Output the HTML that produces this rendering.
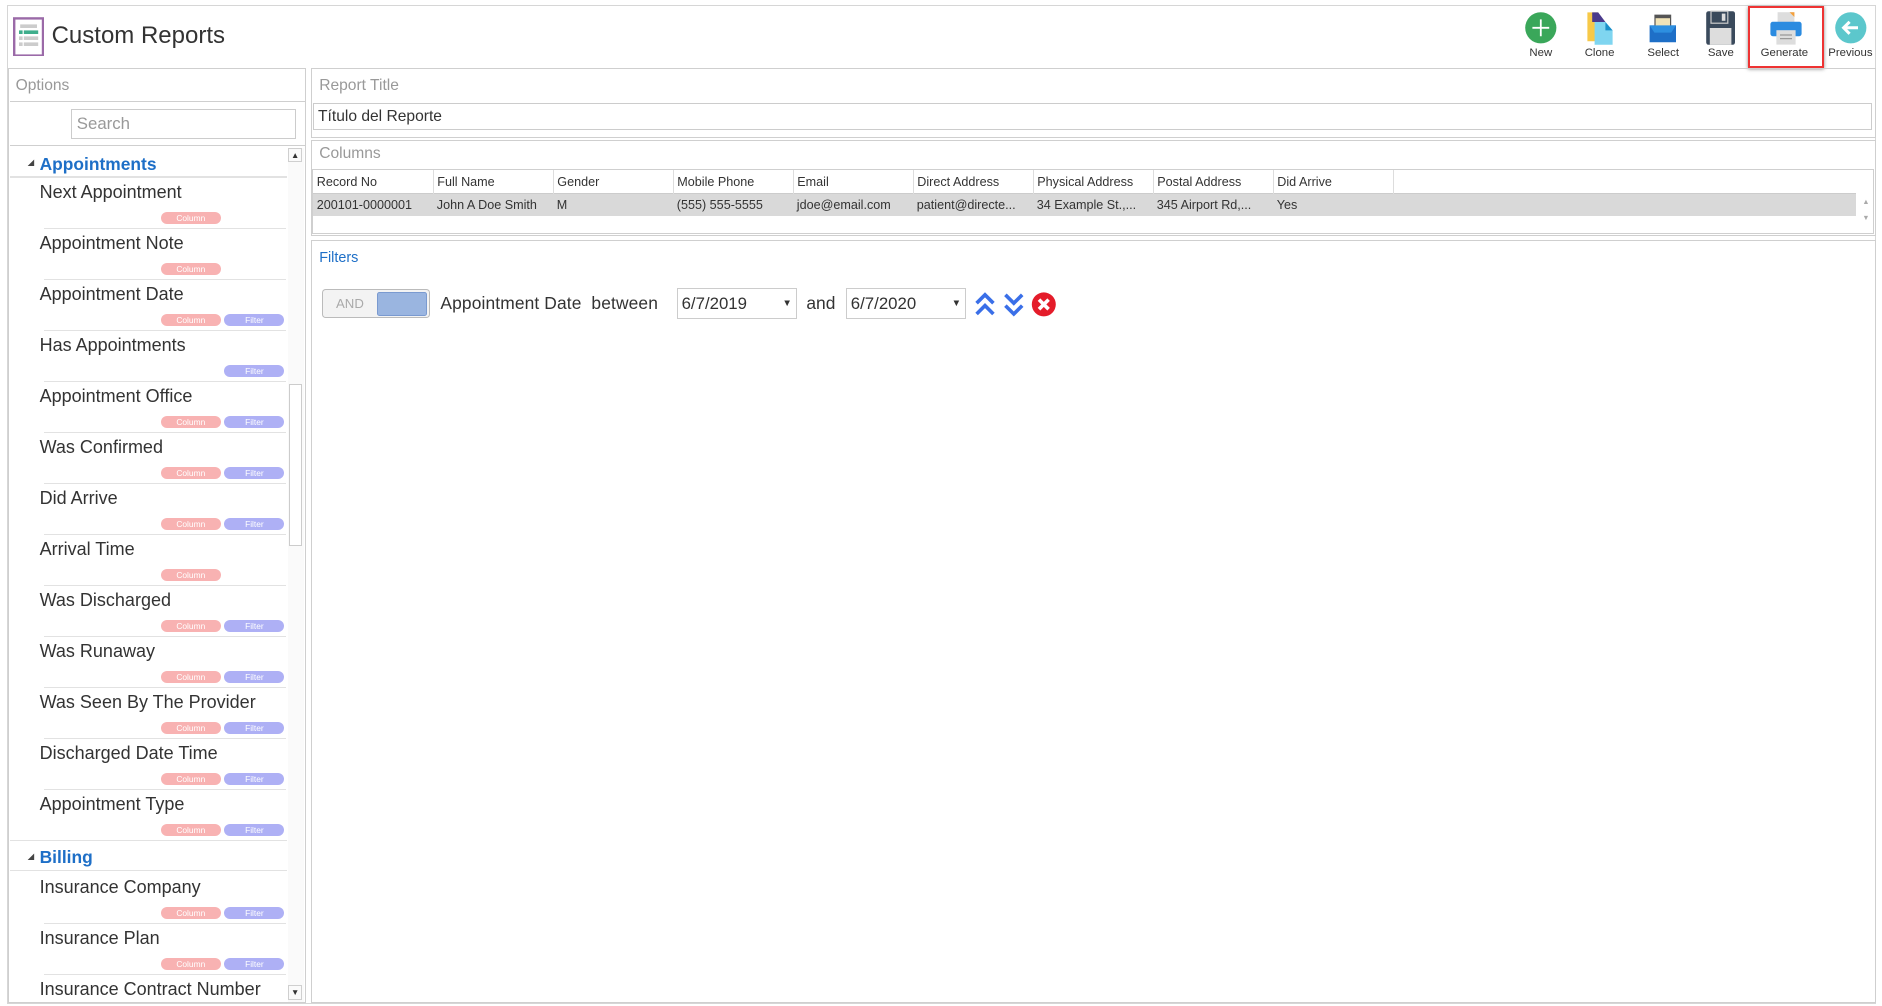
<!DOCTYPE html>
<html><head><meta charset="utf-8"><style>
*{box-sizing:border-box;margin:0;padding:0}
html,body{width:1882px;height:1006px;overflow:hidden;background:#fff}
#root{zoom:1.2;position:relative;width:1568px;height:838px;font-family:"Liberation Sans",sans-serif;color:#333}
.abs{position:absolute}
.box{position:absolute;border:1px solid #cfcfcf}
.lbl{position:absolute;font-size:12px;color:#999}
.item{position:absolute;left:33px;font-size:15px;color:#333}
.sep{position:absolute;left:37px;width:201px;height:1px;background:#e2e2e2}
.bc,.bf{position:absolute;width:50px;height:10px;border-radius:5px;font-size:7px;color:#fff;text-align:center;line-height:10px}
.bc{left:134px;background:#f8b2b2}
.bf{left:187px;background:#aeb0f5}
.grp{position:absolute;left:33px;font-size:14.5px;font-weight:bold;color:#1e6fc7}
.tri{position:absolute;left:23px;font-size:7px;color:#444}
th,td{font-weight:normal;text-align:left;font-size:10.5px;padding-left:3px;height:19px;border-right:1px solid #ddd;white-space:nowrap;overflow:hidden;width:100px;max-width:100px}
.tb{font-size:9.5px;color:#333;position:absolute;text-align:center;width:50px;top:39px}
</style></head><body><div id="root">
<div class="box" style="left:6px;top:4px;width:1557px;height:833px;border-color:#d6d6d6"></div>
<svg class="abs" style="left:11px;top:13px" width="26" height="34"><rect x="1" y="2" width="24" height="31" fill="#fff" stroke="#9b6aa8" stroke-width="2"/><rect x="6" y="7" width="14" height="3" fill="#ccc"/><rect x="5" y="12" width="3" height="3" fill="#3fae8c"/><rect x="9" y="12" width="12" height="3" fill="#3fae8c"/><rect x="5" y="17" width="3" height="3" fill="#ccc"/><rect x="9" y="17" width="12" height="3" fill="#ccc"/><rect x="5" y="22" width="3" height="3" fill="#ccc"/><rect x="9" y="22" width="12" height="3" fill="#ccc"/></svg>
<div class="abs" style="left:43px;top:18px;font-size:20px;color:#333">Custom Reports</div>
<svg class="abs" style="left:1270px;top:9px" width="28" height="28"><circle cx="14" cy="14" r="13" fill="#3aa75a"/><path d="M14 7v14M7 14h14" stroke="#fff" stroke-width="1.5"/></svg>
<div class="tb" style="left:1259px">New</div>
<svg class="abs" style="left:1321px;top:8px" width="26" height="30"><path d="M2 2h9v24H2z" fill="#f7c948"/><path d="M6 2h5l6 8H6z" fill="#4a3a8c"/><path d="M8 10h9l6 7v12H8z" fill="#7fd5f0"/><path d="M17 10l6 7h-6z" fill="#1a8fc9"/></svg>
<div class="tb" style="left:1308px">Clone</div>
<svg class="abs" style="left:1372px;top:9px" width="28" height="28"><path d="M3 12h22v14H3z" fill="#1e6fc7"/><path d="M7 3h14v12H7z" fill="#555"/><path d="M8 6h12v10H8z" fill="#f1e4b8"/><path d="M3 12l4 6h14l4-6" fill="#2d8fe0"/></svg>
<div class="tb" style="left:1361px">Select</div>
<svg class="abs" style="left:1421px;top:8px" width="26" height="30"><rect x="1" y="1" width="24" height="28" rx="2" fill="#3a4a5c"/><rect x="5" y="1" width="14" height="10" fill="#3a4a5c" stroke="#ccc"/><rect x="14" y="3" width="3" height="6" fill="#ddd"/><rect x="4" y="15" width="18" height="14" fill="#ddd"/></svg>
<div class="tb" style="left:1409px">Save</div>
<div class="abs" style="left:1457px;top:5px;width:63px;height:52px;border:2px solid #e33;box-shadow:0 1px 3px #888"></div>
<svg class="abs" style="left:1473px;top:9px" width="30" height="30"><rect x="8" y="1" width="14" height="9" fill="#ddd"/><path d="M18 1h4v4z" fill="#f5a03a"/><rect x="2" y="9" width="26" height="12" rx="2" fill="#2b8be0"/><rect x="7" y="16" width="16" height="12" fill="#ddd"/><path d="M10 20h10M10 23h10" stroke="#999"/></svg>
<div class="tb" style="left:1462px">Generate</div>
<svg class="abs" style="left:1528px;top:9px" width="28" height="28"><circle cx="14" cy="14" r="13" fill="#5cc7cc"/><path d="M20 14H9M13 9l-5 5 5 5" stroke="#fff" stroke-width="2.5" fill="none"/></svg>
<div class="tb" style="left:1517px">Previous</div>
<div class="box" style="left:7px;top:57px;width:248px;height:779px"></div>
<div class="lbl" style="left:13px;top:64px;font-size:13px">Options</div>
<div class="abs" style="left:8px;top:84px;width:246px;height:1px;background:#cfcfcf"></div>
<div class="box" style="left:59px;top:91px;width:188px;height:25px;border-color:#ccc"></div>
<div class="abs" style="left:64px;top:95px;font-size:14px;color:#999">Search</div>
<div class="abs" style="left:8px;top:121px;width:246px;height:1px;background:#cfcfcf"></div>
<div class="abs" style="left:240px;top:123px;width:13px;height:712px;background:#fafafa"></div>
<div class="box" style="left:240px;top:123px;width:12px;height:12px;font-size:7px;text-align:center;line-height:10px">▲</div>
<div class="box" style="left:240px;top:821px;width:12px;height:12px;font-size:7px;text-align:center;line-height:10px">▼</div>
<div class="box" style="left:241px;top:320px;width:11px;height:135px;background:#fff;border-color:#ccc"></div>
<div class="tri" style="top:131px">◢</div><div class="grp" style="top:128px">Appointments</div>
<div class="abs" style="left:8px;top:147px;width:231px;height:1px;background:#e2e2e2"></div>
<div id="items"></div>
<div class="box" style="left:259px;top:57px;width:1304px;height:58px"></div>
<div class="lbl" style="left:266px;top:64px;font-size:13px">Report Title</div>
<div class="box" style="left:261px;top:86px;width:1299px;height:22px;border-color:#ccc"></div>
<div class="abs" style="left:265px;top:90px;font-size:13px;color:#333">Título del Reporte</div>
<div class="box" style="left:259px;top:117px;width:1304px;height:80px"></div>
<div class="lbl" style="left:266px;top:121px;font-size:13px">Columns</div>
<div class="box" style="left:260px;top:141px;width:1302px;height:54px"></div>
<table class="abs" style="left:261px;top:142px;border-collapse:collapse;width:1286px">
<tr style="border-bottom:1px solid #ccc"><th>Record No</th><th>Full Name</th><th>Gender</th><th>Mobile Phone</th><th>Email</th><th>Direct Address</th><th>Physical Address</th><th>Postal Address</th><th>Did Arrive</th><th style="width:auto;max-width:none;border:0"></th></tr>
<tr style="background:#d9d9d9"><td style="border:0">200101-0000001</td><td style="border:0">John A Doe Smith</td><td style="border:0">M</td><td style="border:0">(555) 555-5555</td><td style="border:0">jdoe@email.com</td><td style="border:0">patient@directe...</td><td style="border:0">34 Example St.,...</td><td style="border:0">345 Airport Rd,...</td><td style="border:0">Yes</td><td style="border:0;width:auto;max-width:none"></td></tr>
</table>
<div class="abs" style="left:1549px;top:162px;width:12px;height:32px;font-size:6px;color:#aaa;text-align:center;line-height:13px">▲<br>▼</div>
<div class="box" style="left:259px;top:200px;width:1304px;height:636px"></div>
<div class="abs" style="left:266px;top:208px;font-size:12px;color:#1e6fc7">Filters</div>
<div class="abs" style="left:268px;top:241px;width:90px;height:24px;border:1px solid #bbb;border-radius:3px;background:#f3f3f3"></div>
<div class="abs" style="left:280px;top:247px;font-size:11px;color:#aaa">AND</div>
<div class="abs" style="left:314px;top:243px;width:42px;height:20px;background:#9ab5e0;border:1px solid #7a9ad0;border-radius:2px"></div>
<div class="abs" style="left:367px;top:244px;font-size:14.5px;color:#333;letter-spacing:0.1px">Appointment Date&nbsp; between</div>
<div class="box" style="left:564px;top:240px;width:100px;height:26px;border-color:#ccc"></div>
<div class="abs" style="left:568px;top:245px;font-size:14px">6/7/2019</div><div class="abs" style="left:652px;top:248px;font-size:8px">▼</div>
<div class="abs" style="left:672px;top:244px;font-size:14.5px">and</div>
<div class="box" style="left:705px;top:240px;width:100px;height:26px;border-color:#ccc"></div>
<div class="abs" style="left:709px;top:245px;font-size:14px">6/7/2020</div><div class="abs" style="left:793px;top:248px;font-size:8px">▼</div>
<svg class="abs" style="left:811px;top:242px" width="72" height="24"><path d="M3 11l7-7 7 7M3 20l7-7 7 7" stroke="#3a6fe8" stroke-width="3" fill="none"/><path d="M27 4l7 7 7-7M27 13l7 7 7-7" stroke="#3a6fe8" stroke-width="3" fill="none"/><circle cx="59" cy="12" r="10" fill="#e41c2a"/><path d="M55 8l8 8M63 8l-8 8" stroke="#fff" stroke-width="3"/></svg>
</div>
<script>
var it=[["Next Appointment","C"],["Appointment Note","C"],["Appointment Date","CF"],["Has Appointments","F"],["Appointment Office","CF"],["Was Confirmed","CF"],["Did Arrive","CF"],["Arrival Time","C"],["Was Discharged","CF"],["Was Runaway","CF"],["Was Seen By The Provider","CF"],["Discharged Date Time","CF"],["Appointment Type","CF"]];
var h="",y=152;
function add(n,b){h+='<div class="item" style="top:'+y+'px">'+n+'</div>';if(b.indexOf("C")>=0)h+='<div class="bc" style="top:'+(y+25)+'px">Column</div>';if(b.indexOf("F")>=0)h+='<div class="bf" style="top:'+(y+25)+'px">Filter</div>';h+='<div class="sep" style="top:'+(y+38)+'px"></div>';y+=42.5;}
it.forEach(function(a){add(a[0],a[1])});
h+='<div class="abs" style="left:8px;top:700px;width:231px;height:1px;background:#e2e2e2"></div><div class="tri" style="top:709px">◢</div><div class="grp" style="top:706px">Billing</div><div class="abs" style="left:8px;top:725px;width:231px;height:1px;background:#e2e2e2"></div>';
y=731;add("Insurance Company","CF");add("Insurance Plan","CF");add("Insurance Contract Number","");
document.getElementById("items").innerHTML=h;
</script>
</body></html>
